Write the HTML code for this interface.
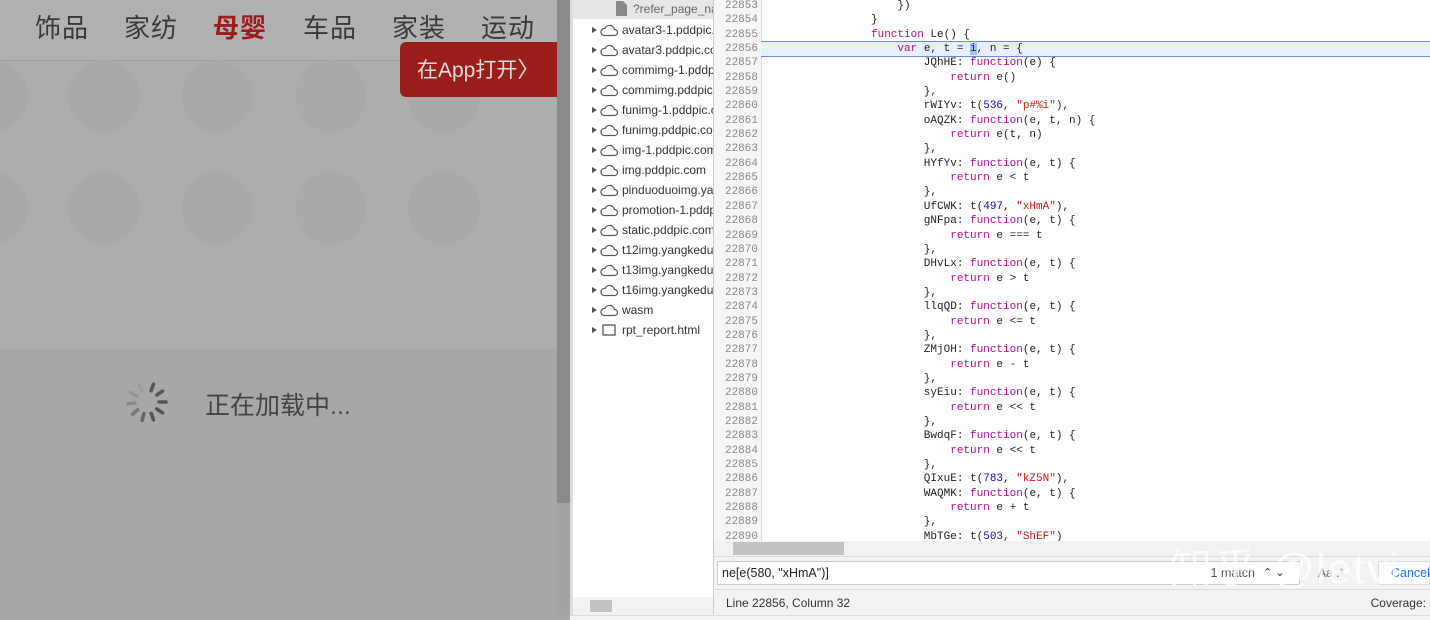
<!DOCTYPE html>
<html><head><meta charset="utf-8"><style>
*{margin:0;padding:0;box-sizing:border-box}
body{width:1430px;height:620px;overflow:hidden;position:relative;background:#fff;font-family:"Liberation Sans","Noto Sans CJK SC",sans-serif}
.a{position:absolute}
#left{left:0;top:0;width:570px;height:620px;background:#a7a7a7}
.nav{top:8px;font-size:26px;color:#3a3a3a;letter-spacing:1px}
.c{width:72px;height:72px;border-radius:50%;background:#a9a9a9}
.ti{position:absolute;left:0;height:20px;width:140px;font-size:12px;color:#333;white-space:nowrap;line-height:20px}
.ti .tr{position:absolute;left:19px;top:7px;width:0;height:0;border-left:5px solid #555;border-top:3.5px solid transparent;border-bottom:3.5px solid transparent}
.ti svg{position:absolute;left:27px;top:3px}
.ti span{position:absolute;left:49px;top:0}
.ln{position:absolute;left:714px;width:44px;text-align:right;font-family:"Liberation Mono",monospace;font-size:11px;color:#888;line-height:14.35px}
.code{position:absolute;font-family:"Liberation Mono",monospace;font-size:11px;color:#222;white-space:pre;line-height:14.35px}
.k{color:#aa0d91}.n{color:#1c00cf}.s{color:#c41a16}
</style></head><body>
<div id="left" class="a">
 <div class="a" style="left:0;top:0;width:557px;height:60px;background:#b1b1b1"></div>
 <div class="a" style="left:0;top:60px;width:557px;height:1px;background:#9c9c9c"></div>
 <div class="a" style="left:0;top:61px;width:557px;height:288px;background:#adadad"></div>
 <div class="a nav" style="left:35px">饰品</div>
 <div class="a nav" style="left:124px">家纺</div>
 <div class="a nav" style="left:213px;color:#9b1c1c;font-weight:bold">母婴</div>
 <div class="a nav" style="left:303px">车品</div>
 <div class="a nav" style="left:392px">家装</div>
 <div class="a nav" style="left:481px">运动</div>
 <div class="a c" style="left:-44px;top:60px"></div><div class="a c" style="left:68px;top:60px"></div><div class="a c" style="left:181px;top:60px"></div><div class="a c" style="left:295px;top:60px"></div><div class="a c" style="left:408px;top:60px"></div>
 <div class="a c" style="left:-44px;top:172px"></div><div class="a c" style="left:68px;top:172px"></div><div class="a c" style="left:181px;top:172px"></div><div class="a c" style="left:295px;top:172px"></div><div class="a c" style="left:408px;top:172px"></div>
 <div class="a" style="left:400px;top:42px;width:157px;height:55px;background:#9b1e1b;border-radius:6px 0 0 6px;color:#ddd;font-size:21px;line-height:55px;padding-left:17px">在App打开<span style="font-size:22px">〉</span></div>
 <div class="a" style="left:557px;top:0;width:13px;height:503px;background:#8a8a8a"></div>
 <div class="a" style="left:557px;top:503px;width:13px;height:117px;background:#a3a3a3"></div>
 <svg class="a" style="left:125px;top:380px" width="44" height="44" viewBox="0 0 44 44">
  <g stroke-width="3.5" stroke-linecap="round">
   <line x1="22" y1="3" x2="22" y2="10" stroke="#555" transform="rotate(20 22 22)"/>
   <line x1="22" y1="3" x2="22" y2="10" stroke="#555" transform="rotate(55 22 22)"/>
   <line x1="22" y1="3" x2="22" y2="10" stroke="#555" transform="rotate(90 22 22)"/>
   <line x1="22" y1="3" x2="22" y2="10" stroke="#555" transform="rotate(125 22 22)"/>
   <line x1="22" y1="3" x2="22" y2="10" stroke="#555" transform="rotate(160 22 22)"/>
   <line x1="22" y1="3" x2="22" y2="10" stroke="#666" transform="rotate(195 22 22)"/>
   <line x1="22" y1="3" x2="22" y2="10" stroke="#777" transform="rotate(230 22 22)"/>
   <line x1="22" y1="3" x2="22" y2="10" stroke="#888" transform="rotate(265 22 22)"/>
   <line x1="22" y1="3" x2="22" y2="10" stroke="#959595" transform="rotate(300 22 22)"/>
   <line x1="22" y1="3" x2="22" y2="10" stroke="#9d9d9d" transform="rotate(335 22 22)"/>
  </g></svg>
 <div class="a" style="left:205px;top:386px;font-size:25px;color:#444">正在加载中...</div>
</div>
<div class="a" style="left:570px;top:0;width:3px;height:620px;background:#ddd"></div>
<div class="a" style="left:573px;top:0;width:140px;height:597px;overflow:hidden;background:#fff">
 <div class="a" style="left:0;top:0;width:140px;height:19px;background:#e6e6e6"></div>
 <svg class="a" style="left:43px;top:1px" width="11" height="15"><path d="M0 0H7L11 4V15H0Z" fill="#888"/></svg>
 <div class="a" style="left:60px;top:2px;font-size:12px;color:#666;white-space:nowrap">?refer_page_na</div>
</div>
<div class="a" style="left:573px;top:20px;width:140px;height:330px;overflow:hidden">
 <div class="ti" style="top:0"><i class="tr"></i><svg width="18" height="14"><path d="M4 12.5H14.5A3 3 0 0 0 14.5 6.5A5 5 0 0 0 5 5.5A3.5 3.5 0 0 0 4 12.5Z" fill="none" stroke="#555" stroke-width="1.2"/></svg><span>avatar3-1.pddpic.c</span></div>
 <div class="ti" style="top:20px"><i class="tr"></i><svg width="18" height="14"><path d="M4 12.5H14.5A3 3 0 0 0 14.5 6.5A5 5 0 0 0 5 5.5A3.5 3.5 0 0 0 4 12.5Z" fill="none" stroke="#555" stroke-width="1.2"/></svg><span>avatar3.pddpic.com</span></div>
 <div class="ti" style="top:40px"><i class="tr"></i><svg width="18" height="14"><path d="M4 12.5H14.5A3 3 0 0 0 14.5 6.5A5 5 0 0 0 5 5.5A3.5 3.5 0 0 0 4 12.5Z" fill="none" stroke="#555" stroke-width="1.2"/></svg><span>commimg-1.pddpic</span></div>
 <div class="ti" style="top:60px"><i class="tr"></i><svg width="18" height="14"><path d="M4 12.5H14.5A3 3 0 0 0 14.5 6.5A5 5 0 0 0 5 5.5A3.5 3.5 0 0 0 4 12.5Z" fill="none" stroke="#555" stroke-width="1.2"/></svg><span>commimg.pddpic.c</span></div>
 <div class="ti" style="top:80px"><i class="tr"></i><svg width="18" height="14"><path d="M4 12.5H14.5A3 3 0 0 0 14.5 6.5A5 5 0 0 0 5 5.5A3.5 3.5 0 0 0 4 12.5Z" fill="none" stroke="#555" stroke-width="1.2"/></svg><span>funimg-1.pddpic.c</span></div>
 <div class="ti" style="top:100px"><i class="tr"></i><svg width="18" height="14"><path d="M4 12.5H14.5A3 3 0 0 0 14.5 6.5A5 5 0 0 0 5 5.5A3.5 3.5 0 0 0 4 12.5Z" fill="none" stroke="#555" stroke-width="1.2"/></svg><span>funimg.pddpic.com</span></div>
 <div class="ti" style="top:120px"><i class="tr"></i><svg width="18" height="14"><path d="M4 12.5H14.5A3 3 0 0 0 14.5 6.5A5 5 0 0 0 5 5.5A3.5 3.5 0 0 0 4 12.5Z" fill="none" stroke="#555" stroke-width="1.2"/></svg><span>img-1.pddpic.com</span></div>
 <div class="ti" style="top:140px"><i class="tr"></i><svg width="18" height="14"><path d="M4 12.5H14.5A3 3 0 0 0 14.5 6.5A5 5 0 0 0 5 5.5A3.5 3.5 0 0 0 4 12.5Z" fill="none" stroke="#555" stroke-width="1.2"/></svg><span>img.pddpic.com</span></div>
 <div class="ti" style="top:160px"><i class="tr"></i><svg width="18" height="14"><path d="M4 12.5H14.5A3 3 0 0 0 14.5 6.5A5 5 0 0 0 5 5.5A3.5 3.5 0 0 0 4 12.5Z" fill="none" stroke="#555" stroke-width="1.2"/></svg><span>pinduoduoimg.yan</span></div>
 <div class="ti" style="top:180px"><i class="tr"></i><svg width="18" height="14"><path d="M4 12.5H14.5A3 3 0 0 0 14.5 6.5A5 5 0 0 0 5 5.5A3.5 3.5 0 0 0 4 12.5Z" fill="none" stroke="#555" stroke-width="1.2"/></svg><span>promotion-1.pddp</span></div>
 <div class="ti" style="top:200px"><i class="tr"></i><svg width="18" height="14"><path d="M4 12.5H14.5A3 3 0 0 0 14.5 6.5A5 5 0 0 0 5 5.5A3.5 3.5 0 0 0 4 12.5Z" fill="none" stroke="#555" stroke-width="1.2"/></svg><span>static.pddpic.com</span></div>
 <div class="ti" style="top:220px"><i class="tr"></i><svg width="18" height="14"><path d="M4 12.5H14.5A3 3 0 0 0 14.5 6.5A5 5 0 0 0 5 5.5A3.5 3.5 0 0 0 4 12.5Z" fill="none" stroke="#555" stroke-width="1.2"/></svg><span>t12img.yangkeduo</span></div>
 <div class="ti" style="top:240px"><i class="tr"></i><svg width="18" height="14"><path d="M4 12.5H14.5A3 3 0 0 0 14.5 6.5A5 5 0 0 0 5 5.5A3.5 3.5 0 0 0 4 12.5Z" fill="none" stroke="#555" stroke-width="1.2"/></svg><span>t13img.yangkeduo</span></div>
 <div class="ti" style="top:260px"><i class="tr"></i><svg width="18" height="14"><path d="M4 12.5H14.5A3 3 0 0 0 14.5 6.5A5 5 0 0 0 5 5.5A3.5 3.5 0 0 0 4 12.5Z" fill="none" stroke="#555" stroke-width="1.2"/></svg><span>t16img.yangkeduo</span></div>
 <div class="ti" style="top:280px"><i class="tr"></i><svg width="18" height="14"><path d="M4 12.5H14.5A3 3 0 0 0 14.5 6.5A5 5 0 0 0 5 5.5A3.5 3.5 0 0 0 4 12.5Z" fill="none" stroke="#555" stroke-width="1.2"/></svg><span>wasm</span></div>
 <div class="ti" style="top:300px"><i class="tr"></i><svg width="18" height="14"><rect x="3" y="2" width="12" height="10" fill="none" stroke="#555" stroke-width="1.3"/></svg><span>rpt_report.html</span></div>
</div>
<div class="a" style="left:573px;top:597px;width:140px;height:18px;background:#f2f2f2"></div>
<div class="a" style="left:590px;top:600px;width:22px;height:12px;background:#c2c2c2"></div>
<div class="a" style="left:713px;top:0;width:1px;height:620px;background:#ccc"></div>
<div class="a" style="left:714px;top:0;width:47px;height:541px;background:#f6f6f6"></div>
<div class="a" style="left:761px;top:0;width:1px;height:541px;background:#ddd"></div>
<div class="a" style="left:761px;top:41px;width:669px;height:16px;background:#e8eefa;border-top:1px solid #6f8ad3;border-bottom:1px solid #6f8ad3"></div>
<div class="ln" style="top:-1px">22853<br>22854<br>22855<br>22856<br>22857<br>22858<br>22859<br>22860<br>22861<br>22862<br>22863<br>22864<br>22865<br>22866<br>22867<br>22868<br>22869<br>22870<br>22871<br>22872<br>22873<br>22874<br>22875<br>22876<br>22877<br>22878<br>22879<br>22880<br>22881<br>22882<br>22883<br>22884<br>22885<br>22886<br>22887<br>22888<br>22889<br>22890</div>
<div class="code" style="left:871px;top:-1px;height:542px;overflow:hidden">    })
}
<span class="k">function</span> Le() {
    <span class="k">var</span> e, t = <span style="background:#a8c0f0">i</span>, n = {
        JQhHE: <span class="k">function</span>(e) {
            <span class="k">return</span> e()
        },
        rWIYv: t(<span class="n">536</span>, <span class="s">"p#%i"</span>),
        oAQZK: <span class="k">function</span>(e, t, n) {
            <span class="k">return</span> e(t, n)
        },
        HYfYv: <span class="k">function</span>(e, t) {
            <span class="k">return</span> e &lt; t
        },
        UfCWK: t(<span class="n">497</span>, <span class="s">"xHmA"</span>),
        gNFpa: <span class="k">function</span>(e, t) {
            <span class="k">return</span> e === t
        },
        DHvLx: <span class="k">function</span>(e, t) {
            <span class="k">return</span> e &gt; t
        },
        llqQD: <span class="k">function</span>(e, t) {
            <span class="k">return</span> e &lt;= t
        },
        ZMjOH: <span class="k">function</span>(e, t) {
            <span class="k">return</span> e - t
        },
        syEiu: <span class="k">function</span>(e, t) {
            <span class="k">return</span> e &lt;&lt; t
        },
        BwdqF: <span class="k">function</span>(e, t) {
            <span class="k">return</span> e &lt;&lt; t
        },
        QIxuE: t(<span class="n">783</span>, <span class="s">"kZ5N"</span>),
        WAQMK: <span class="k">function</span>(e, t) {
            <span class="k">return</span> e + t
        },
        MbTGe: t(<span class="n">503</span>, <span class="s">"ShEF"</span>)</div>
<div class="a" style="left:714px;top:541px;width:716px;height:15px;background:#f2f2f2"></div>
<div class="a" style="left:733px;top:542px;width:111px;height:13px;background:#c2c2c2"></div>
<div class="a" style="left:714px;top:556px;width:716px;height:33px;background:#f3f3f3;border-top:1px solid #ddd"></div>
<div class="a" style="left:717px;top:561px;width:583px;height:24px;background:#fff;border:1px solid #ccc;font-size:12.5px;line-height:22px;padding-left:4px;color:#222">ne[e(580, "xHmA")]<span style="position:absolute;right:44px;color:#555">1 match</span></div>
<div class="a" style="left:1263px;top:566px;font-size:11px;color:#333">⌃ ⌄</div>
<div class="a" style="left:1318px;top:566px;font-size:12px;color:#666">Aa .*</div>
<div class="a" style="left:1378px;top:561px;width:52px;height:24px;background:#fff;border:1px solid #ddd;color:#1a73e8;font-size:12.5px;line-height:22px;padding-left:12px">Cancel</div>
<div class="a" style="left:1170px;top:535px;font-size:42px;color:rgba(255,255,255,0.75);letter-spacing:2px;white-space:nowrap">知乎 @letvi</div>
<div class="a" style="left:714px;top:589px;width:716px;height:26px;background:#f3f3f3;border-top:1px solid #ddd;font-size:12px;color:#333;line-height:26px;padding-left:12px">Line 22856, Column 32<span style="position:absolute;right:4px">Coverage:</span></div>
<div class="a" style="left:0;top:615px;width:1430px;height:5px;background:#f3f3f3;border-top:1px solid #ddd"></div>
<div class="a" style="left:0;top:615px;width:570px;height:5px;background:#a7a7a7"></div>
</body></html>
